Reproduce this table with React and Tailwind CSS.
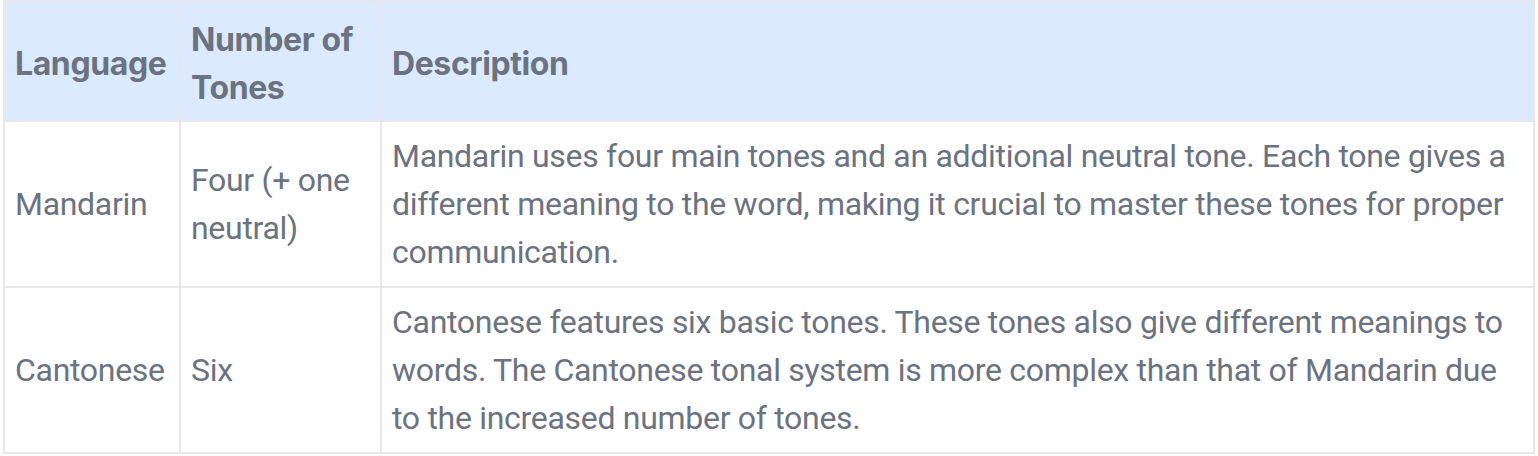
export default function App() {
  const rows = [
    {
      lang: "Mandarin",
      tones: "Four (+ one neutral)",
      desc: "Mandarin uses four main tones and an additional neutral tone. Each tone gives a different meaning to the word, making it crucial to master these tones for proper communication.",
    },
    {
      lang: "Cantonese",
      tones: "Six",
      desc: "Cantonese features six basic tones. These tones also give different meanings to words. The Cantonese tonal system is more complex than that of Mandarin due to the increased number of tones.",
    },
  ];
  const th = "border-2 border-[#e5e7eb] px-[10px] pt-[14px] pb-[8px] text-left font-bold align-middle tracking-[-0.4px] font-['Inter',sans-serif]";
  const td = "border-2 border-[#e5e7eb] px-[10px] py-[10px] align-middle tracking-[-0.3px]";
  return (
    <div className="bg-white w-[1538px] h-[456px] pl-[3px] font-['Roboto','Noto_Sans',sans-serif]">
      <table className="border-collapse w-[1532px] text-[32px] leading-[48px] text-[#6b7280] table-fixed">
        <colgroup>
          <col className="w-[176px]" />
          <col className="w-[201px]" />
          <col />
        </colgroup>
        <thead>
          <tr className="bg-[#dbeafe]">
            <th className={th}>Language</th>
            <th className={th}>Number of Tones</th>
            <th className={th}>Description</th>
          </tr>
        </thead>
        <tbody>
          {rows.map((r) => (
            <tr key={r.lang}>
              <td className={td}>{r.lang}</td>
              <td className={td}>{r.tones}</td>
              <td className={td}>{r.desc}</td>
            </tr>
          ))}
        </tbody>
      </table>
    </div>
  );
}
